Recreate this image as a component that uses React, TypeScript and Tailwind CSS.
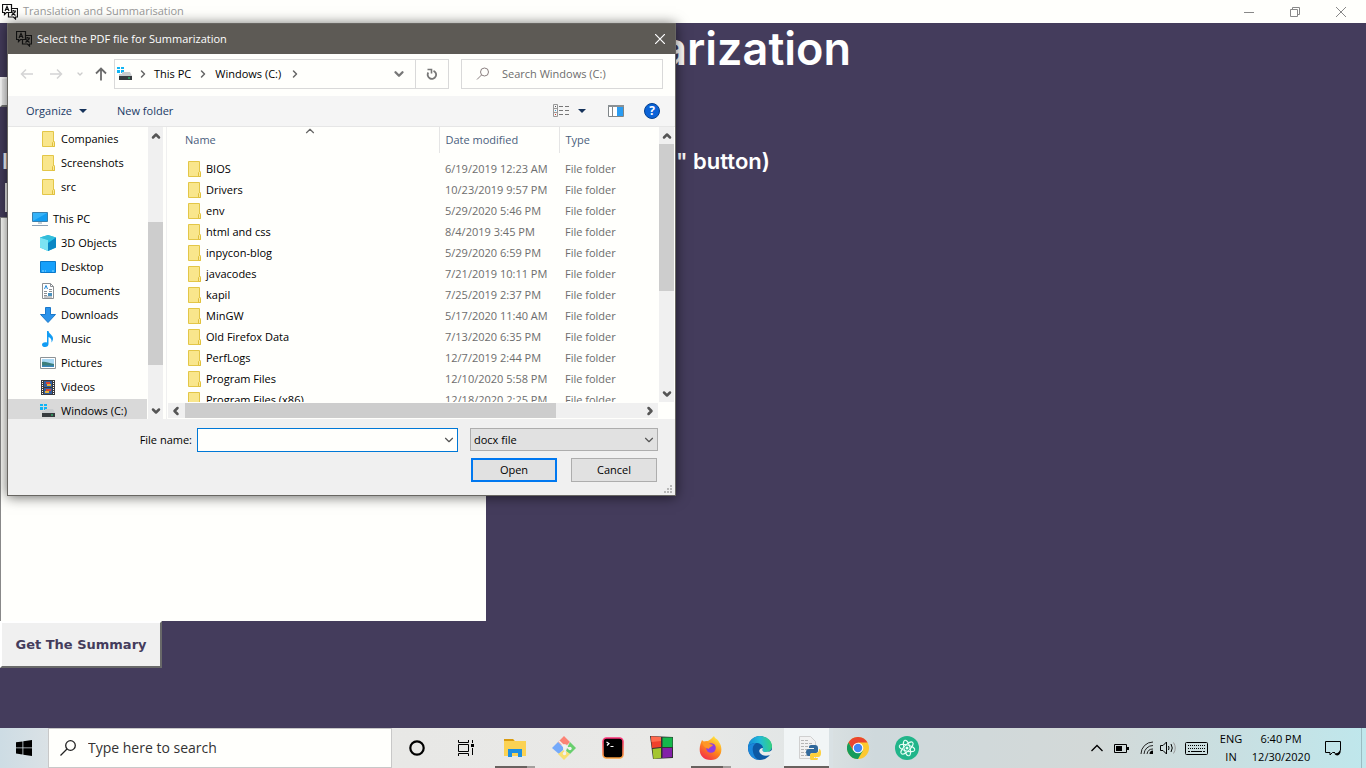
import { useState, type ReactNode } from "react";
import { ChevronDown, ChevronLeft, ChevronRight, ChevronUp } from "lucide-react";

const files = [
  { name: "BIOS", date: "6/19/2019 12:23 AM" },
  { name: "Drivers", date: "10/23/2019 9:57 PM" },
  { name: "env", date: "5/29/2020 5:46 PM" },
  { name: "html and css", date: "8/4/2019 3:45 PM" },
  { name: "inpycon-blog", date: "5/29/2020 6:59 PM" },
  { name: "javacodes", date: "7/21/2019 10:11 PM" },
  { name: "kapil", date: "7/25/2019 2:37 PM" },
  { name: "MinGW", date: "5/17/2020 11:40 AM" },
  { name: "Old Firefox Data", date: "7/13/2020 6:35 PM" },
  { name: "PerfLogs", date: "12/7/2019 2:44 PM" },
  { name: "Program Files", date: "12/10/2020 5:58 PM" },
  { name: "Program Files (x86)", date: "12/18/2020 2:25 PM" },
];

function Svg({ children, className = "size-4", box = "0 0 16 16" }: { children: ReactNode; className?: string; box?: string }) {
  return (
    <svg viewBox={box} className={`shrink-0 ${className}`} fill="none" aria-hidden="true">
      {children}
    </svg>
  );
}

function FolderIcon() {
  return (
    <Svg>
      <path d="M2.500.5h11v10.2h1v4.8h-12z" fill="#f9e68c" stroke="#e3c647" />
      <path d="M12.500 15.500v-4l1-1 1 1v4z" fill="#fbe99a" stroke="#e0c03c" />
    </Svg>
  );
}

function DriveIcon() {
  return (
    <Svg>
      <path d="M0 1h3v2H0zM4 1h3v2H4zM0 4h3v3H0zM4 4h3v3H4z" fill="#12b5f5" />
      <path d="M5 6h8l2 4H2V8h3z" fill="#c9ccce" />
      <path d="M2 10h13v4H2z" fill="#373b3e" />
      <path d="M11 11.500h2v1h-2z" fill="#2fe07a" />
    </Svg>
  );
}

function TranslateIcon() {
  return (
    <Svg>
      <path d="M.5.5h9v8h-5l-2 2v-2h-2zM10 4.500h5.500v8.500h-2v2l-2-2h-5V9" stroke="#111" strokeWidth="1.200" />
      <path d="M3 7l2-4.500L7 7M3.800 5.500h2.500M9 7h5M11.500 6v1.500M9.500 11.500l4-4M10 8.500l3.500 3" stroke="#111" strokeWidth="1.200" />
    </Svg>
  );
}

const places = [
  {
    name: "3D Objects",
    icon: (
      <Svg>
        <path d="M8 0l8 2.500v10L8 16l-8-3.500v-10z" fill="#27c4e8" />
        <path d="M0 2.500L8 5v11l-8-3.500z" fill="#7be3f2" />
        <path d="M0 2.500L8 0l8 2.500L8 5z" fill="#35bdd9" />
        <path d="M8 8l8-5.500v10L8 16z" fill="#0a87c4" />
      </Svg>
    ),
  },
  {
    name: "Desktop",
    icon: (
      <Svg>
        <path d="M.5 2.500h15v11H.5z" fill="#16a0fb" stroke="#0b79c9" />
        <path d="M2 12h2M5 12h1M12 12h2" stroke="#8fd8ff" />
      </Svg>
    ),
  },
  {
    name: "Documents",
    icon: (
      <Svg>
        <path d="M2.500.5h8l3 3v12h-11z" fill="#fff" stroke="#8b8f92" />
        <path d="M10.500.5v3h3M4 8.500h3M4 10.500h3M4 12.500h3M9 8.500h3M9 6.500h3M4 14h8" stroke="#8b8f92" />
        <path d="M4.500 6L6 2.500 7.500 6" stroke="#1e88d8" />
        <path d="M8 10h4v3H8z" fill="#4a91bd" />
      </Svg>
    ),
  },
  {
    name: "Downloads",
    icon: (
      <Svg>
        <path d="M5.500.5h5v7h5L8 15.500.5 7.500h5z" fill="#2b93ea" stroke="#1b78ca" />
      </Svg>
    ),
  },
  {
    name: "Music",
    icon: (
      <Svg>
        <path d="M7 0h1.500c.5 3 4.500 4 4.500 7.500 0 1.800-.8 3-1.500 4 .5-3-.8-4.500-3-5.500v7c0 1.700-1.500 3-3.300 3S2 15.200 2 13.700C2 12 4 10.800 7 11.500z" fill="#129cf3" />
      </Svg>
    ),
  },
  {
    name: "Pictures",
    icon: (
      <Svg>
        <path d="M.5 2.500h15v11H.5z" fill="#fff" stroke="#8d9396" />
        <path d="M2 4h12v8H2z" fill="#a9d8f4" />
        <path d="M2 7c3-1 6 1 12 2v3H2z" fill="#3d7f7c" />
        <path d="M2 10.500h12V12H2z" fill="#3986bb" />
      </Svg>
    ),
  },
  {
    name: "Videos",
    icon: (
      <Svg>
        <path d="M1 1h14v15H1z" fill="#3a3b3d" />
        <path d="M4 2h8v6H4zM4 9h8v6H4z" fill="#345f9e" />
        <path d="M2.500 2v13M13.500 2v13" stroke="#fff" strokeDasharray="1 1" />
        <path d="M6 3h4v2H6zM6 10h5v2H6z" fill="#d94632" />
        <path d="M7 5h4v2H7zM5 12h4v2H5z" fill="#e2b43c" />
      </Svg>
    ),
  },
];

function AppTitleBar() {
  return (
    <header className="flex h-[23px] shrink-0 items-center bg-[#fffffc] pr-0.5 pl-0.5 font-['Open_Sans','Noto_Sans',sans-serif] text-[11px] text-[#999]">
      <TranslateIcon />
      <span className="ml-[5px] flex-1">Translation and Summarisation</span>
      <button aria-label="Minimize" className="flex h-5 w-[46px] items-center justify-center">
        <Svg className="size-2.5" box="0 0 10 10"><path d="M0 5.500h10" stroke="#888" /></Svg>
      </button>
      <button aria-label="Restore" className="flex h-5 w-[46px] items-center justify-center">
        <Svg className="size-2.5" box="0 0 10 10"><path d="M.5 2.500h7v7h-7zM2.500 2.500v-2h7v7h-2" stroke="#888" /></Svg>
      </button>
      <button aria-label="Close" className="flex h-5 w-[46px] items-center justify-center">
        <Svg className="size-2.5" box="0 0 10 10"><path d="M0 0l10 10M10 0L0 10" stroke="#888" /></Svg>
      </button>
    </header>
  );
}

function AddressRow() {
  return (
    <div className="flex h-[42px] items-center bg-[#fffffc] pr-3 pb-0.5">
      <button aria-label="Back" className="ml-[11px] flex w-4 justify-center">
        <Svg><path d="M14 8H2.500M7 3.500L2.500 8 7 12.500" stroke="#d4d4d4" strokeWidth="1.500" /></Svg>
      </button>
      <button aria-label="Forward" className="ml-[13px] flex w-4 justify-center">
        <Svg><path d="M2 8h11.500M9 3.500L13.500 8 9 12.500" stroke="#d4d4d4" strokeWidth="1.500" /></Svg>
      </button>
      <button aria-label="Recent locations" className="ml-3 flex w-2 justify-center">
        <ChevronDown className="size-2 shrink-0 text-[#ccc]" strokeWidth={4} />
      </button>
      <button aria-label="Up" className="mr-[5px] ml-[9px] flex w-4 justify-center">
        <Svg><path d="M8 14.500V3M3 7.500L8 2.500l5 5" stroke="#6b6b6b" strokeWidth="1.800" /></Svg>
      </button>
      <div className="flex h-[30px] flex-1 items-center border border-[#d9d9d9] pl-0.5">
        <DriveIcon />
        <ChevronRight className="ml-1 size-3 text-[#666]" strokeWidth={3} />
        <button className="ml-[5px]">This PC</button>
        <ChevronRight className="ml-1.5 size-3 text-[#666]" strokeWidth={3} />
        <button className="ml-1.5">Windows (C:)</button>
        <ChevronRight className="ml-2 size-3 text-[#666]" strokeWidth={3} />
        <button aria-label="Previous locations" className="ml-auto flex w-8 justify-center">
          <ChevronDown className="size-3.5 text-[#777]" strokeWidth={4} />
        </button>
        <button aria-label="Refresh" className="flex h-full w-[33px] items-center justify-center border-l border-[#d9d9d9]">
          <Svg className="size-3" box="0 0 12 12">
            <path d="M7.500 2.800A4.200 4.200 0 1 1 2.300 4.500" stroke="#777" strokeWidth="1.800" />
            <path d="M1.500 1.500h4v4" stroke="#777" strokeWidth="1.600" />
          </Svg>
        </button>
      </div>
      <label className="ml-3 flex h-[30px] w-[202px] items-center border border-[#d9d9d9] pl-3.5">
        <Svg className="size-3.5" box="0 0 14 14">
          <circle cx="8.500" cy="5" r="4" stroke="#8a7f80" />
          <path d="M5.500 8L1 12.500" stroke="#8a7f80" />
        </Svg>
        <input aria-label="Search" placeholder="Search Windows (C:)" className="ml-3 w-full min-w-0 outline-none placeholder:text-[#6d6d6d]" />
      </label>
    </div>
  );
}

function Toolbar() {
  return (
    <div className="flex h-[31px] items-center border-b border-[#e6e6e6] bg-[#f5f5f5] pr-[15px] pl-[18px] text-[#1a3b66]">
      <button className="flex items-center">
        Organize
        <Svg className="ml-[7px] h-1 w-2" box="0 0 8 4"><path d="M0 0h8L4 4z" fill="#16335b" /></Svg>
      </button>
      <button className="ml-[30px]">New folder</button>
      <button aria-label="Change your view" className="ml-auto flex items-center">
        <Svg>
          <path d="M.5 1.500h4v12h-4zM.5 5.500h4M.5 9.500h4" stroke="#999" />
          <path d="M2 3h1v1H2z" fill="#555" />
          <path d="M2 7h1v1H2z" fill="#39a0dc" />
          <path d="M2 11h1v1H2z" fill="#d43c22" />
          <path d="M6 3.500h4M12 3.500h4M6 7.500h4M12 7.500h4M6 11.500h4M12 11.500h4" stroke="#777" />
        </Svg>
        <Svg className="ml-[9px] h-1 w-2" box="0 0 8 4"><path d="M0 0h8L4 4z" fill="#16335b" /></Svg>
      </button>
      <button aria-label="Preview pane" className="ml-[22px]">
        <Svg>
          <path d="M.5 2.500h15v11H.5z" fill="#fff" stroke="#7f8588" />
          <path d="M0 2h16v2H0z" fill="#8b9194" />
          <path d="M4.500 4v9" stroke="#7f8588" />
          <path d="M9 4h6v9H9z" fill="#2a9cf2" />
        </Svg>
      </button>
      <button aria-label="Help" className="ml-5 flex size-4 items-center justify-center rounded-full border border-[#03408f] bg-[#0b63d8] text-xs font-bold text-white">
        ?
      </button>
    </div>
  );
}

function NavPane() {
  return (
    <nav className="h-full min-w-0 flex-1 overflow-hidden">
      {["Companies", "Screenshots", "src"].map((name) => (
        <a key={name} href="#" className="flex h-6 items-center gap-[5px] pl-8">
          <FolderIcon /> {name}
        </a>
      ))}
      <a href="#" className="mt-2 flex h-6 items-center gap-[5px] pl-6">
        <Svg>
          <path d="M.5 1.500h15v9H.5z" fill="#35b3f8" stroke="#3980ad" />
          <path d="M1 10L15 2v8z" fill="#129cf0" />
          <path d="M6 12h4M0 14.500h16" stroke="#8ba0b4" />
        </Svg>
        This PC
      </a>
      {places.map((p) => (
        <a key={p.name} href="#" className="flex h-6 items-center gap-[5px] pl-8">
          {p.icon} {p.name}
        </a>
      ))}
      <a href="#" className="flex h-6 items-center gap-[5px] bg-[#d9d9d9] pl-8">
        <DriveIcon /> Windows (C:)
      </a>
    </nav>
  );
}

function FileTable() {
  return (
    <div className="min-h-0 flex-1 overflow-hidden">
      <table className="w-full table-fixed border-collapse text-left">
        <thead>
          <tr className="h-[26px] text-[#4a607c]">
            <th className="w-[272px] border-r border-[#e5e5e5] p-0 pl-[18px] font-normal">
              <div className="relative">
                Name
                <ChevronUp className="absolute -top-2 left-[118px] size-3.5 text-[#666]" strokeWidth={2} />
              </div>
            </th>
            <th className="w-[120px] border-r border-[#e5e5e5] p-0 pl-1.5 font-normal">Date modified</th>
            <th className="p-0 pl-1.5 font-normal">Type</th>
          </tr>
        </thead>
        <tbody>
          <tr className="h-[5px]"><td colSpan={3} className="p-0" /></tr>
          {files.map((f) => (
            <tr key={f.name} className="h-[21px] text-[#6d6d6d]">
              <td className="p-0 pl-[19px] text-black">
                <div className="flex items-center gap-1"><FolderIcon /> {f.name}</div>
              </td>
              <td className="p-0 pl-1.5 whitespace-nowrap">{f.date}</td>
              <td className="p-0 pl-1.5">File folder</td>
            </tr>
          ))}
        </tbody>
      </table>
    </div>
  );
}

function FileDialog() {
  const [fileName, setFileName] = useState("");

  return (
    <section
      role="dialog"
      aria-label="Select the PDF file for Summarization"
      className="absolute top-[23px] left-[7px] w-[669px] border border-[#686662] bg-[#f0f0f0] font-['Open_Sans','Noto_Sans',sans-serif] text-[11px] leading-4 text-black shadow-[0_1px_12px_rgba(0,0,0,0.6)]"
    >
      <div className="flex h-[30px] items-center bg-[#5d5a55] pr-2.5 pl-2 text-white">
        <TranslateIcon />
        <h2 className="ml-[5px] flex-1">Select the PDF file for Summarization</h2>
        <button aria-label="Close dialog">
          <Svg className="size-2.5" box="0 0 10 10"><path d="M0 0l10 10M10 0L0 10" stroke="#fff" strokeWidth="1.200" /></Svg>
        </button>
      </div>
      <AddressRow />
      <Toolbar />

      <div className="flex h-[292px] bg-[#fffffc]">
        <div className="flex w-[155px] gap-px">
          <NavPane />
          <div className="flex w-[15px] flex-col items-center bg-[#f0f0f0]">
            <ChevronUp className="mt-[3px] size-3 shrink-0 text-[#555]" strokeWidth={5} />
            <div className="mt-20 h-[143px] w-full bg-[#cdcdcd]" />
            <ChevronDown className="mt-auto mb-0.5 size-3 shrink-0 text-[#555]" strokeWidth={5} />
          </div>
        </div>
        <div className="ml-[3px] flex min-w-0 flex-1 flex-col border-l border-[#f0f0f0]">
          <div className="flex h-[275px]">
            <FileTable />
            <div className="mr-px flex w-[15px] flex-col items-center bg-[#f0f0f0]">
              <ChevronUp className="mt-[3px] size-3 shrink-0 text-[#555]" strokeWidth={5} />
              <div className="mt-0.5 h-[147px] w-full bg-[#cdcdcd]" />
              <ChevronDown className="mt-auto mb-0.5 size-3 shrink-0 text-[#555]" strokeWidth={5} />
            </div>
          </div>
          <div className="mt-px mr-[17px] ml-px flex h-[15px] items-center bg-[#f0f0f0]">
            <ChevronLeft className="ml-0.5 size-3 text-[#555]" strokeWidth={5} />
            <div className="ml-[3px] h-full w-[371px] bg-[#cdcdcd]" />
            <ChevronRight className="mr-0.5 ml-auto size-3 text-[#555]" strokeWidth={5} />
          </div>
        </div>
      </div>

      <div className="relative pt-[9px] pb-[13px]">
        <div className="flex h-6 pr-[17px]">
          <label htmlFor="file-name" className="w-[184px] self-center text-right">File name:</label>
          <div className="relative ml-[5px] flex-1">
            <input
              id="file-name"
              value={fileName}
              onChange={(e) => setFileName(e.target.value)}
              className="h-full w-full border border-[#0078d7] bg-[#fffffc] px-1 outline-none"
            />
            <ChevronDown className="absolute top-[5px] right-0.5 size-3.5 text-[#555]" strokeWidth={2} />
          </div>
          <div className="relative ml-3 w-[188px]">
            <select aria-label="File type" className="h-[23px] w-full appearance-none border border-[#adadad] bg-[#e1e1e1] pl-[3px]">
              <option>docx file</option>
            </select>
            <ChevronDown className="absolute top-[5px] right-0.5 size-3.5 text-[#555]" strokeWidth={2} />
          </div>
        </div>
        <div className="mt-1.5 flex justify-end gap-3.5 pr-[18px]">
          <button className="h-6 w-[86px] border-2 border-[#0078f0] bg-[#e1e1e1]">Open</button>
          <button className="h-6 w-[86px] border border-[#adadad] bg-[#e1e1e1]">Cancel</button>
        </div>
        <Svg className="absolute right-[3px] bottom-0.5 size-2" box="0 0 8 8">
          <path d="M6 0h2v2H6zM3 3h2v2H3zM6 3h2v2H6zM0 6h2v2H0zM3 6h2v2H3zM6 6h2v2H6z" fill="#b8b8b8" />
        </Svg>
      </div>
    </section>
  );
}

const apps = [
  {
    name: "Cortana",
    state: "",
    icon: <Svg><circle cx="8" cy="8" r="6.700" stroke="#000" strokeWidth="2.200" /></Svg>,
  },
  {
    name: "Task View",
    state: "",
    icon: (
      <Svg>
        <path d="M.5 0v2.500h10V0M.5 4.500h10v7H.5zM.5 16v-2.500h10V16M14.500 0v3M14.500 8v7" stroke="#000" />
        <path d="M13 4h3v3h-3z" fill="#000" />
      </Svg>
    ),
  },
  {
    name: "File Explorer",
    state: "open",
    icon: (
      <Svg className="size-[22px]" box="0 0 22 22">
        <path d="M0 2h9l2 2h11v15H0z" fill="#fbd253" />
        <path d="M0 2h9l1.500 2H0z" fill="#d99b10" />
        <path d="M4 20v-8h14v8h-4v-4H8v4z" fill="#1d8fe1" />
      </Svg>
    ),
  },
  {
    name: "Git",
    state: "",
    icon: (
      <Svg className="size-6" box="0 0 24 24">
        <path d="M12 0l6 6-3 3-2-1-4 1-3-3z" fill="#fc8375" />
        <path d="M6 6l5 5v3l-4 4-7-6z" fill="#74a9fa" />
        <path d="M18 6l6 6-6 6-4-3 2-5z" fill="#68cf6e" />
        <path d="M12 14l6 4-6 6-6-6z" fill="#f8df72" />
        <path d="M7 5l6 6v7M13 10l5 3" stroke="#f2f2f0" strokeWidth="1.500" />
        <circle cx="12.500" cy="10.500" r="1.700" fill="#f2f2f0" />
        <circle cx="12.500" cy="17.500" r="1.700" fill="#f2f2f0" />
        <circle cx="18" cy="12.500" r="1.700" fill="#f2f2f0" />
      </Svg>
    ),
  },
  {
    name: "Terminal",
    state: "",
    icon: (
      <Svg className="size-[22px]" box="0 0 22 22">
        <defs>
          <linearGradient id="term" x1="0" y1="0" x2="0" y2="1">
            <stop stopColor="#fb2f78" />
            <stop offset="1" stopColor="#f9a13c" />
          </linearGradient>
        </defs>
        <rect x="1" y="1" width="20" height="20" rx="3.500" fill="#000" stroke="url(#term)" strokeWidth="1.600" />
        <path d="M4.500 5l2.500 1.500L5 8.500M8.500 9.500h3" stroke="#fff" strokeWidth="1.200" />
      </Svg>
    ),
  },
  {
    name: "Cubes",
    state: "",
    icon: (
      <Svg className="size-6" box="0 0 24 24">
        <path d="M0 0l23 1v21L3 23z" fill="#333" />
        <path d="M1 .5l10 .5v10L2 12z" fill="#f0402c" />
        <path d="M1 .5l10 .5v4L1.500 6z" fill="#ff6a4d" />
        <path d="M12.500 1.500h10V11h-10z" fill="#15b84b" />
        <path d="M2.500 13l8.500-1v10l-7.500 1z" fill="#a4c62f" />
        <path d="M12.500 12h9.500v9l-9.500 1z" fill="#8321a8" />
      </Svg>
    ),
  },
  {
    name: "Firefox",
    state: "open",
    icon: (
      <Svg className="size-6" box="0 0 24 24">
        <defs>
          <linearGradient id="fox" x1=".8" y1="0" x2=".2" y2="1">
            <stop stopColor="#fff046" />
            <stop offset=".5" stopColor="#ff8a18" />
            <stop offset="1" stopColor="#f32550" />
          </linearGradient>
        </defs>
        <path d="M15 0c1 3 4 3 5 6 5 7 2 18-8 18S-1 16 1.500 8L3 4l2 2c1-1 2-1 4-1 2-1 4-3 6-5z" fill="url(#fox)" />
        <circle cx="12" cy="12" r="4.800" fill="#913de0" />
        <path d="M3 6c4-1 6 0 8 2l3 1c-1 2-4 2-4 4-3-1-6-2-7-7z" fill="#ff9626" />
      </Svg>
    ),
  },
  {
    name: "Edge",
    state: "",
    icon: (
      <Svg className="size-6" box="0 0 24 24">
        <defs>
          <linearGradient id="edge" x1="0" y1=".5" x2="1" y2=".4">
            <stop stopColor="#1488d8" />
            <stop offset=".5" stopColor="#22b9d9" />
            <stop offset="1" stopColor="#35d37a" />
          </linearGradient>
        </defs>
        <circle cx="12" cy="12" r="12" fill="#0c59a4" />
        <path d="M0 11C1 4 6 0 12 0c7 0 12 5 12 10 0 4-3 6-6 6-4 0-4-2-3-4 0-3-3-5-7-5-4 0-7 2-8 4z" fill="url(#edge)" />
        <path d="M0 11c2-3 5-4 8-4-3 2-4 5-3 9 1 5 4 8 8 8C6 24 0 20 0 11z" fill="#1b87db" />
        <path d="M15 12c-1 2-1 4 3 4 3 0 5-1 6-2v3l-2 2c-3 1-7 1-9-1-3-2-2-6 2-6z" fill="#e8eceb" />
      </Svg>
    ),
  },
  {
    name: "Python",
    state: "active",
    icon: (
      <Svg className="size-6" box="0 0 24 24">
        <path d="M2.500.5h11l5 5v17h-16z" fill="#f2f2f2" stroke="#d0d0d0" />
        <path d="M4 4.500h8M4 7.500h11M4 10.500h11M4 13.500h8M4 16.500h8M4 19.500h10" stroke="#b5b5b5" strokeDasharray="3 1" />
        <path d="M14 9h4q3 0 3 3v3q0 2-3 2h-3q-2 0-2 3h-2q-2-1-2-4t3-3h5v-1h-5v-1q0-2 2-2z" fill="#31699b" />
        <path d="M22 13q2 0 2 4t-3 4h-4v1h4q0 3-4 3t-4-3v-3q0-2 3-2h3q3 0 3-4z" fill="#fdd03b" />
      </Svg>
    ),
  },
  {
    name: "Chrome",
    state: "",
    icon: (
      <Svg className="size-[22px]" box="0 0 24 24">
        <circle cx="12" cy="12" r="12" fill="#fdc931" />
        <path d="M1.600 6A12 12 0 0 1 22.400 6H12L7 15z" fill="#ea4630" />
        <path d="M1.600 6A12 12 0 0 0 12 24l5.200-9H6.800z" fill="#169b5c" />
        <circle cx="12" cy="12" r="5.800" fill="#fff" />
        <circle cx="12" cy="12" r="4.600" fill="#4385f4" />
      </Svg>
    ),
  },
  {
    name: "Atom",
    state: "",
    icon: (
      <Svg className="size-6" box="0 0 24 24">
        <circle cx="12" cy="12" r="12" fill="#21b58a" />
        <g stroke="#e9fff6" strokeWidth="1">
          <ellipse cx="12" cy="12" rx="8" ry="3" transform="rotate(15 12 12)" />
          <ellipse cx="12" cy="12" rx="8" ry="3" transform="rotate(75 12 12)" />
          <ellipse cx="12" cy="12" rx="8" ry="3" transform="rotate(135 12 12)" />
        </g>
        <circle cx="12" cy="12" r="1.500" fill="#e9fff6" />
      </Svg>
    ),
  },
];

function Taskbar() {
  return (
    <footer className="flex h-10 shrink-0 bg-[linear-gradient(90deg,#cddce4_0%,#e0e4e6_5%,#e8e8e6_28%,#e9e9e7_50%,#e2e6e6_58%,#cfd9dc_64%,#d3d9d8_80%,#c9dfe1_90%,#bfe7ec_100%)] font-['Open_Sans','Noto_Sans',sans-serif] text-[11px] text-black">
      <button aria-label="Start" className="flex w-12 items-center justify-center">
        <Svg><path d="M0 2.300L6.500 1.400V7.500H0zM7.300 1.300L16 0v7.500H7.300zM0 8.300h6.500v6.200L0 13.600zM7.300 8.300H16V16l-8.700-1.300z" fill="#000" /></Svg>
      </button>
      <label className="flex w-[344px] items-center border border-[#c8c8c8] bg-[#fffffc] pl-[11px]">
        <Svg>
          <circle cx="10.500" cy="5.500" r="4.800" stroke="#222" strokeWidth="1.300" />
          <path d="M7 9L.5 15.500" stroke="#222" strokeWidth="1.300" />
        </Svg>
        <input aria-label="Search" placeholder="Type here to search" className="ml-3 w-full min-w-0 text-sm outline-none placeholder:text-[#333]" />
      </label>
      {apps.map((a) => (
        <button key={a.name} aria-label={a.name} className={`relative flex w-[49px] items-center justify-center ${a.state === "active" ? "border-r-4 border-[#d9e1e4] bg-[#f1f5f6] pl-1" : ""}`}>
          {a.icon}
          {a.state === "open" && <span className="absolute bottom-0 left-[5px] h-0.5 w-10 border-r-8 border-[#a39f9d] bg-[#68625f]" />}
          {a.state === "active" && <span className="absolute bottom-0 left-0 h-0.5 w-full bg-[#68625f]" />}
        </button>
      ))}
      <div className="ml-auto flex items-center">
        <button aria-label="Show hidden icons" className="flex w-5 justify-center">
          <Svg className="h-2 w-3" box="0 0 12 8"><path d="M.5 7L6 1.500 11.500 7" stroke="#000" strokeWidth="1.300" /></Svg>
        </button>
        <button aria-label="Battery" className="flex w-7 justify-center">
          <Svg className="h-[9px] w-[15px]" box="0 0 15 9">
            <path d="M.5.5h12v8H.5z" stroke="#000" />
            <path d="M2 2h6v5H2zM13 3h2v3h-2z" fill="#000" />
          </Svg>
        </button>
        <button aria-label="Network" className="flex w-6 justify-center">
          <Svg className="size-3.5" box="0 0 14 14">
            <path d="M1 13A12 12 0 0 1 13 1M4 13A9 9 0 0 1 13 4.500M7 13a6 6 0 0 1 6-5" stroke="#222" />
            <path d="M9.500 13a3.500 3.500 0 0 1 3.500-3.500V13z" fill="#000" />
          </Svg>
        </button>
        <button aria-label="Volume" className="flex w-[18px] justify-center">
          <Svg>
            <path d="M.5 5.500h2.500l3.500-3.500v12L3 10.500H.5zM8.500 6q1 2 0 4M11 4q2.500 4 0 8" stroke="#000" />
            <path d="M13.500 2.500q3.500 5.500 0 11" stroke="#999" />
          </Svg>
        </button>
        <button aria-label="Touch keyboard" className="flex w-[38px] justify-center">
          <Svg className="h-[13px] w-[23px]" box="0 0 23 13">
            <rect x=".5" y=".5" width="22" height="12" rx="1" stroke="#000" />
            <path d="M3 3.500h17M3 6.500h17" stroke="#000" strokeDasharray="1 1" />
            <path d="M3 9.500h2M6 9.500h11M18 9.500h2" stroke="#000" />
          </Svg>
        </button>
        <button className="w-8 leading-[18px]">ENG<br />IN</button>
        <button className="w-[68px] leading-[18px]">6:40 PM<br />12/30/2020</button>
        <button aria-label="Notifications" className="mr-2.5 flex w-9 justify-center">
          <Svg>
            <path d="M10 12.500H7.500L5 15v-2.500H.5v-11h15V10" stroke="#000" />
            <path d="M15.500 8.500c1 4-1 7-3 7s-3-1-3-2.500c3 1 5-1 6-4.500z" fill="#000" />
          </Svg>
        </button>
        <span className="h-10 w-[5px] border-l border-[#9bbcc2]" />
      </div>
    </footer>
  );
}

export default function App() {
  return (
    <div className="relative flex min-h-screen flex-col overflow-hidden bg-[#443c5c] font-[Inter,'DejaVu_Sans',sans-serif] text-white">
      <AppTitleBar />
      <main className="flex flex-1 flex-col items-start">
        <h1 className="h-[54px] w-[851px] text-right text-[45px] leading-[52px] font-semibold">Summarization</h1>
        <button aria-label="Upload" className="h-[30px] w-40 border-2 border-t-white border-r-[#777] border-b-[#777] border-l-white bg-[#f0f0f0]" />
        <p className="mt-9 mb-1 flex h-9 w-[770px] items-center justify-between pl-0.5 text-[22px] font-semibold">
          <span>I</span>
          <span>" button)</span>
        </p>
        <input aria-label="File path" className="ml-[5px] h-[29px] w-72 bg-[#f0f0f0]" />
        <textarea aria-label="Text" className="mt-[5px] block h-[404px] w-[486px] resize-none border-t border-l border-[#888] bg-[#fffffc] text-black outline-none" />
        <button className="h-[47px] w-[162px] border-2 border-t-white border-r-[#696969] border-b-[#696969] border-l-white bg-[#f0f0f0] font-['DejaVu_Sans',sans-serif] text-[13px] font-bold text-[#443c5c]">
          Get The Summary
        </button>
      </main>
      <FileDialog />
      <Taskbar />
    </div>
  );
}
